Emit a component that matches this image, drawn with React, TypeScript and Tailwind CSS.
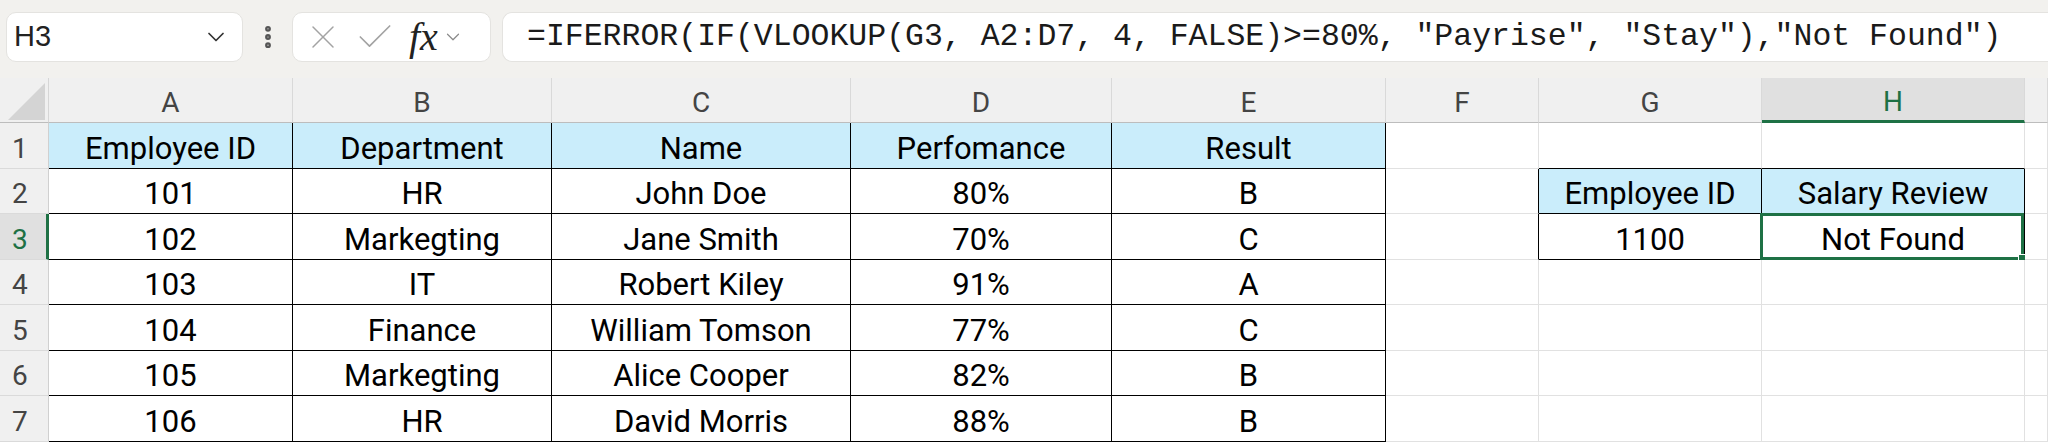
import { Check, ChevronDown, EllipsisVertical, X } from "lucide-react";

const cols = [
  { key: "A", w: "w-[244px]" },
  { key: "B", w: "w-[259px]" },
  { key: "C", w: "w-[299px]" },
  { key: "D", w: "w-[261px]" },
  { key: "E", w: "w-[274px]" },
  { key: "F", w: "w-[153px]" },
  { key: "G", w: "w-[223px]" },
  { key: "H", w: "w-[263px]" },
  { key: "I", w: "flex-1" },
];

const rowHeights = ["h-[46px]", "h-[45px]", "h-[46px]", "h-[45px]", "h-[46px]", "h-[45px]", "h-[46px]"];

const table = [
  ["Employee ID", "Department", "Name", "Perfomance", "Result"],
  ["101", "HR", "John Doe", "80%", "B"],
  ["102", "Markegting", "Jane Smith", "70%", "C"],
  ["103", "IT", "Robert Kiley", "91%", "A"],
  ["104", "Finance", "William Tomson", "77%", "C"],
  ["105", "Markegting", "Alice Cooper", "82%", "B"],
  ["106", "HR", "David Morris", "88%", "B"],
];

const side: Record<string, string> = {
  G2: "Employee ID",
  H2: "Salary Review",
  G3: "1100",
  H3: "Not Found",
};

function cellStyle(col: string, row: number) {
  const inMain = "ABCDE".includes(col);
  const inSide = (col === "G" || col === "H") && (row === 2 || row === 3);
  const black = inMain || inSide;
  const right = black || (col === "F" && (row === 2 || row === 3)) ? "border-r-black" : "border-r-[#e1e1e1]";
  const bottom = black || ((col === "G" || col === "H") && row === 1) ? "border-b-black" : "border-b-[#e1e1e1]";
  const blue = (inMain && row === 1) || (inSide && row === 2) ? "bg-[#caedfb]" : "bg-white";
  return `${right} ${bottom} ${blue}`;
}

function cellText(col: string, row: number) {
  const i = "ABCDE".indexOf(col);
  if (i >= 0) return table[row - 1][i];
  return side[`${col}${row}`] ?? "";
}

export default function App() {
  return (
    <div className="h-[446px] w-[2048px] overflow-hidden bg-white font-['Roboto',sans-serif] text-black">
      {/* formula bar */}
      <div className="flex h-[78px] items-start bg-[#f2f1ee] pt-3">
        <div className="ml-[6px] flex h-[50px] w-[237px] items-center justify-between rounded-[10px] border border-[#e4e3e0] bg-white pl-[7px] pr-[12px]">
          <span className="font-['Liberation_Sans',sans-serif] text-[29px] text-[#222]">H3</span>
          <ChevronDown className="h-[28px] w-[28px] text-[#333]" strokeWidth={1.5} />
        </div>
        <div className="flex h-[50px] w-[49px] items-center justify-center">
          <EllipsisVertical className="h-[28px] w-[28px] text-[#555]" strokeWidth={3} />
        </div>
        <div className="flex h-[50px] w-[199px] items-center rounded-[10px] border border-[#e4e3e0] bg-white pl-[10px]">
          <X className="h-[40px] w-[40px] text-[#a3a3a3]" strokeWidth={0.9} />
          <Check className="ml-[10px] h-[44px] w-[44px] text-[#a3a3a3]" strokeWidth={0.9} />
          <span className="ml-[12px] font-['Liberation_Serif',serif] text-[40px] italic leading-none text-[#222]">fx</span>
          <ChevronDown className="ml-[4px] h-[22px] w-[22px] text-[#8a8a8a]" strokeWidth={1.3} />
        </div>
        <div className="ml-[11px] flex h-[50px] flex-1 items-center rounded-l-[10px] border border-r-0 border-[#e4e3e0] bg-white pl-[24px]">
          <span className="whitespace-pre font-['Liberation_Mono',monospace] text-[31.5px] text-[#1a1a1a]">
            =IFERROR(IF(VLOOKUP(G3, A2:D7, 4, FALSE)&gt;=80%, "Payrise", "Stay"),"Not Found")
          </span>
        </div>
      </div>

      {/* column headers */}
      <div className="flex h-[45px] bg-[#f0f0f0]">
        <div className="relative w-[49px] border-r border-b border-r-[#d6d6d6] border-b-[#bdbdbd]">
          <svg className="absolute left-[8px] top-[5px]" width="37" height="37" viewBox="0 0 37 37">
            <polygon points="37,0 37,37 0,37" fill="#d4d4d4" />
          </svg>
        </div>
        {cols.map((c) => (
          <div
            key={c.key}
            className={`${c.w} flex items-center justify-center border-r border-r-[#d9d9d9] pt-[6px] text-[28px] ${
              c.key === "H"
                ? "border-b-[3px] border-b-[#1e7145] bg-[#e0e0e0] text-[#1e7145]"
                : "border-b border-b-[#bdbdbd] text-[#444]"
            }`}
          >
            {c.key === "I" ? "" : c.key}
          </div>
        ))}
      </div>

      {/* rows */}
      {rowHeights.map((h, r) => {
        const row = r + 1;
        const sel = row === 3;
        return (
          <div key={row} className={`flex ${h}`}>
            <div
              className={`flex w-[49px] items-center border-b border-b-[#dadada] pl-[12px] pt-[6px] text-[28px] ${
                sel
                  ? "border-r-[3px] border-r-[#1e7145] bg-[#e0e0e0] text-[#1e7145]"
                  : "border-r border-r-[#d0d0d0] bg-[#f0f0f0] text-[#444]"
              }`}
            >
              {row}
            </div>
            {cols.map((c) => (
              <div
                key={c.key}
                className={`${c.w} relative flex items-center justify-center border-r border-b pt-[7px] text-[31px] ${cellStyle(c.key, row)}`}
              >
                {cellText(c.key, row)}
                {c.key === "H" && row === 3 && (
                  <div className="absolute -left-[2px] -top-[1px] h-[calc(100%+2px)] w-[calc(100%+2px)] border-[3px] border-[#1e7145]">
                    <div className="absolute -bottom-[6px] -right-[6px] h-[9px] w-[9px] border border-white bg-[#1e7145]" />
                  </div>
                )}
              </div>
            ))}
          </div>
        );
      })}
    </div>
  );
}
